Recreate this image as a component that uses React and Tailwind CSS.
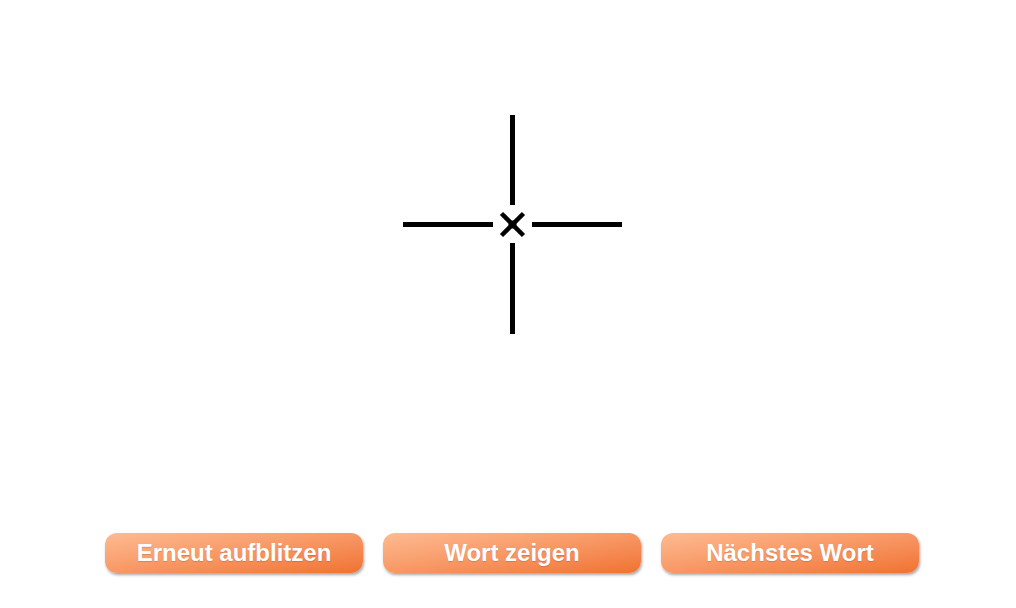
export default function App() {
  const btn =
    "w-[258px] h-[40px] rounded-[12px] flex items-center justify-center text-white font-bold text-[24px] leading-none bg-gradient-to-br from-[#fdbb92] to-[#f0722f] shadow-[1px_2px_3px_rgba(0,0,0,0.35)] [text-shadow:0_1px_1px_rgba(0,0,0,0.15)]";
  return (
    <div
      className="w-[1016px] h-[608px] bg-white flex flex-col items-center pl-[8px]"
      style={{ fontFamily: '"Liberation Sans", Arial, sans-serif' }}
    >
      <svg width="220" height="220" viewBox="0 0 220 220" className="mt-[115px] ml-[2px]">
        <rect x="107" y="0" width="5" height="90" fill="#000" />
        <rect x="107" y="128" width="5" height="91" fill="#000" />
        <rect x="0" y="107" width="90" height="5" fill="#000" />
        <rect x="129" y="107" width="90" height="5" fill="#000" />
        <line x1="98.5" y1="98.5" x2="120.5" y2="120.5" stroke="#000" strokeWidth="4.5" />
        <line x1="120.5" y1="98.5" x2="98.5" y2="120.5" stroke="#000" strokeWidth="4.5" />
        <circle cx="109.5" cy="109.5" r="4" fill="#000" />
      </svg>
      <div className="mt-[198px] flex gap-[20px]">
        <div className={btn}>Erneut aufblitzen</div>
        <div className={btn}>Wort zeigen</div>
        <div className={btn}>Nächstes Wort</div>
      </div>
    </div>
  );
}
